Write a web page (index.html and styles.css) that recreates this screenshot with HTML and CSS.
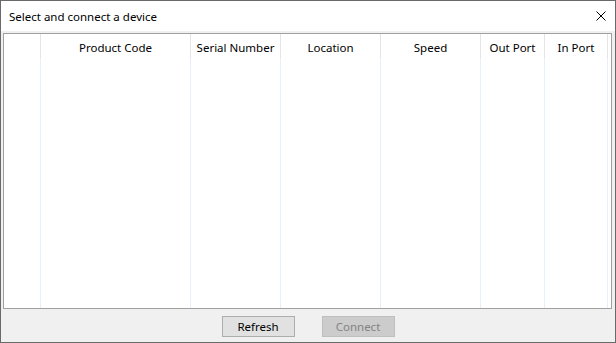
FILE: index.html
```html
<!DOCTYPE html>
<html lang="en">
<head>
    <meta charset="UTF-8">
    <title>Select and connect a device</title>
    <link rel="stylesheet" href="styles.css">
</head>
<body>
    <div class="window">
        <div class="titlebar">
            <span class="title">Select and connect a device</span>
            <div class="close-btn">
                <svg width="10" height="10" viewBox="0 0 10 10">
                    <path d="M0.5 0.5 L9.5 9.5 M9.5 0.5 L0.5 9.5" stroke="#000" stroke-width="1" fill="none"/>
                </svg>
            </div>
        </div>
        <div class="content">
            <div class="list">
                <div class="list-head">
                    <div class="head-cell"></div>
                    <div class="head-cell">Product Code</div>
                    <div class="head-cell">Serial Number</div>
                    <div class="head-cell">Location</div>
                    <div class="head-cell">Speed</div>
                    <div class="head-cell">Out Port</div>
                    <div class="head-cell">In Port</div>
                </div>
                <div class="list-body">
                    <div class="body-col"></div>
                    <div class="body-col"></div>
                    <div class="body-col"></div>
                    <div class="body-col"></div>
                    <div class="body-col"></div>
                    <div class="body-col"></div>
                    <div class="body-col"></div>
                </div>
            </div>
            <div class="buttons">
                <button class="btn">Refresh</button>
                <button class="btn" disabled>Connect</button>
            </div>
        </div>
    </div>
</body>
</html>
```

FILE: styles.css
```css
body {
    margin: 0;
    font-family: "Segoe UI", "Noto Sans", "Open Sans", sans-serif;
    font-size: 11.5px;
    color: #000;
}

.window {
    box-sizing: border-box;
    width: 616px;
    height: 343px;
    border: 1px solid #6a6a6a;
    display: flex;
    flex-direction: column;
    background-color: #f0f0f0;
}

.titlebar {
    height: 30px;
    background-color: #fff;
    display: flex;
    align-items: center;
    justify-content: space-between;
    padding-left: 8px;
}

.close-btn {
    width: 28px;
    height: 30px;
    display: flex;
    align-items: center;
    justify-content: center;
}

.content {
    flex: 1;
    display: flex;
    flex-direction: column;
    padding: 2px 3px 0 2px;
}

.list {
    height: 276px;
    box-sizing: border-box;
    border: 1px solid #a0a0a0;
    background-color: #fff;
    display: flex;
    flex-direction: column;
}

.list-head,
.list-body {
    display: grid;
    grid-template-columns: 37px 150px 90px 100px 100px 64px 63px;
}

.list-head {
    height: 24px;
}

.list-body {
    flex: 1;
}

.head-cell {
    border-right: 1px solid #e5e5e5;
    text-align: center;
    line-height: 24px;
    padding-top: 2px;
    white-space: nowrap;
    overflow: hidden;
}

.body-col {
    border-right: 1px solid #e6effa;
}

.buttons {
    display: flex;
    justify-content: center;
    gap: 27px;
    padding-top: 7px;
    padding-left: 1px;
}

.btn {
    width: 73px;
    height: 21px;
    box-sizing: border-box;
    border: 1px solid #adadad;
    background-color: #e1e1e1;
    font-family: "Segoe UI", "Noto Sans", "Open Sans", sans-serif;
    font-size: 11.5px;
    color: #000;
    padding: 0;
}

.btn:disabled {
    background-color: #cccccc;
    border-color: #bfbfbf;
    color: #838383;
}
```
